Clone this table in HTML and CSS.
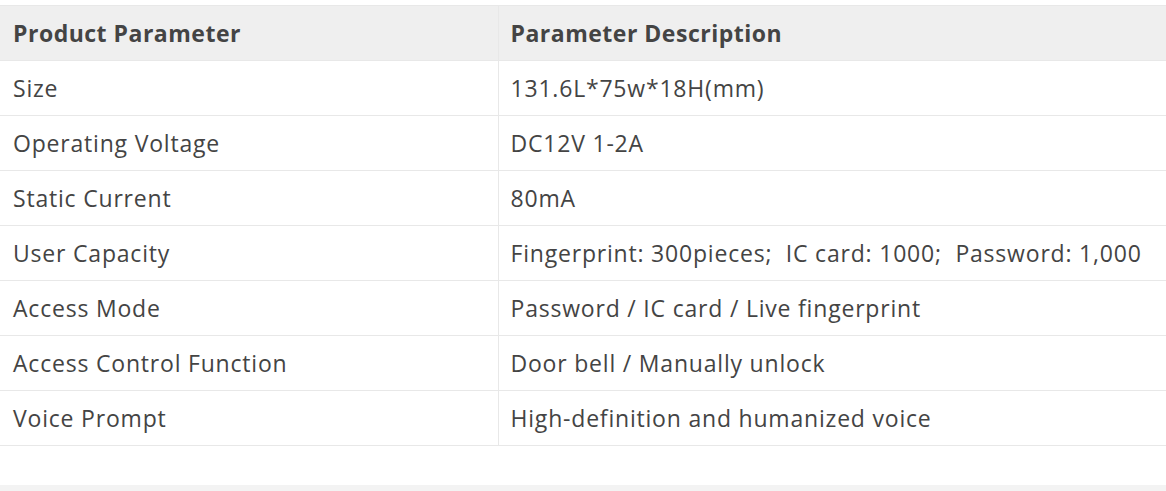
FILE: index.html
```html
<!DOCTYPE html>
<html>
<head>
<meta charset="utf-8">
<link rel="stylesheet" href="styles.css">
</head>
<body>
<div class="page">
  <table class="spec">
    <thead>
      <tr><th class="c1">Product Parameter</th><th>Parameter Description</th></tr>
    </thead>
    <tbody>
      <tr><td class="c1">Size</td><td>131.6L*75w*18H(mm)</td></tr>
      <tr><td class="c1">Operating Voltage</td><td>DC12V 1-2A</td></tr>
      <tr><td class="c1">Static Current</td><td>80mA</td></tr>
      <tr><td class="c1">User Capacity</td><td>Fingerprint: 300pieces;&nbsp; IC card: 1000;&nbsp; Password: 1,000</td></tr>
      <tr><td class="c1">Access Mode</td><td>Password / IC card / Live fingerprint</td></tr>
      <tr><td class="c1">Access Control Function</td><td>Door bell / Manually unlock</td></tr>
      <tr><td class="c1">Voice Prompt</td><td>High-definition and humanized voice</td></tr>
    </tbody>
  </table>
  <div class="footer-band"></div>
</div>
</body>
</html>
```
FILE: styles.css
```css
html, body {
  margin: 0;
  padding: 0;
  background: #ffffff;
}
.page {
  padding-top: 5px;
  font-family: "Open Sans", "Noto Sans", sans-serif;
  color: #444444;
}
.spec {
  width: 100%;
  border-collapse: collapse;
  border-top: 1px solid #e8e8e8;
}
.spec th, .spec td {
  height: 55px;
  padding: 0 12px 0 12px;
  text-align: left;
  vertical-align: middle;
  border-bottom: 1px solid #e8e8e8;
  font-size: 23px;
  box-sizing: border-box;
  white-space: nowrap;
}
.spec th {
  font-weight: 700;
  background: #efefef;
  color: #444444;
  letter-spacing: 0.5px;
}
.spec td {
  font-weight: 400;
  color: #444444;
  letter-spacing: 0.8px;
}
.spec .c1 {
  width: 498px;
  padding-left: 13px;
  border-right: 1px solid #e8e8e8;
}
.footer-band {
  margin-top: 39px;
  height: 6px;
  background: #f3f3f3;
}
```
